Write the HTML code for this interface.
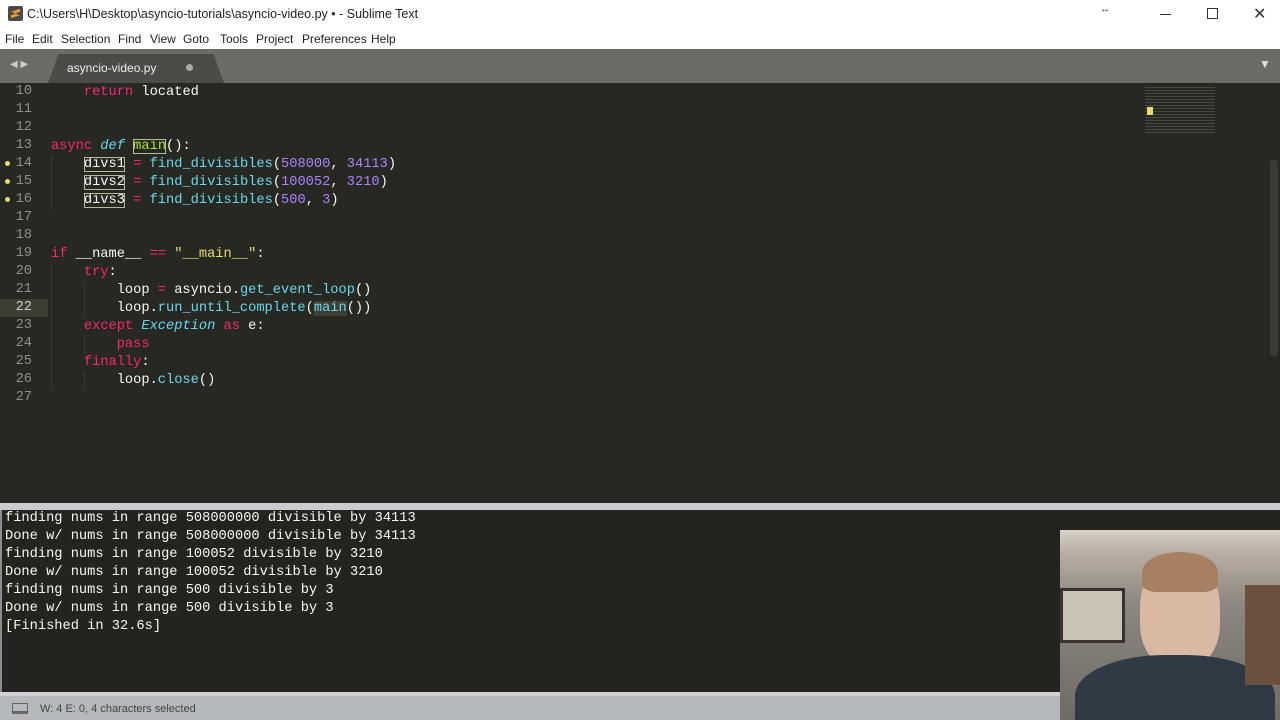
<!DOCTYPE html>
<html><head><meta charset="utf-8"><style>
*{margin:0;padding:0;box-sizing:border-box}
body{width:1280px;height:720px;overflow:hidden;background:#272822;font-family:"Liberation Sans",sans-serif;position:relative}
.abs{position:absolute}
#title{left:0;top:0;width:1280px;height:29px;background:#fff;font-size:12.5px;color:#222}
#menu{left:0;top:29px;width:1280px;height:20px;background:#fff;font-size:12px;color:#222}
#menu span{position:absolute;top:3px}
#tabbar{left:0;top:49px;width:1280px;height:34px;background:#6b6c67}
#tab{left:48px;top:54px;width:176px;height:29px;background:#4b4c47;clip-path:polygon(6% 0,94% 0,100% 100%,0 100%)}
#editor{left:0;top:83px;width:1280px;height:420px;background:#272822}
.code{position:absolute;left:0;font-family:"Liberation Mono",monospace;font-size:13.7px;line-height:18px;color:#f8f8f2;white-space:pre}
.ln{position:absolute;left:0;width:32px;text-align:right;font-family:"Liberation Mono",monospace;font-size:13.7px;color:#8f908a}
.k{color:#f92672}.f{color:#66d9ef}.n{color:#ae81ff}.s{color:#e6db74}.i{color:#66d9ef;font-style:italic}.g{color:#a6e22e}
.box{outline:1px solid #b8b89a;outline-offset:-1px}
.out{position:absolute;left:5px;font-family:"Liberation Mono",monospace;font-size:13.7px;line-height:18px;color:#f8f8f2;white-space:pre}
.guide{position:absolute;width:1px;background:#3b3c36}
</style></head><body>
<div id="title" class="abs">
 <div class="abs" style="left:8px;top:6px;width:15px;height:15px;background:#4a4a4a;border-radius:2px"><div style="position:absolute;left:3px;top:3px;width:9px;height:9px;background:#f0a030;clip-path:polygon(0 30%,100% 0,100% 30%,30% 50%,100% 70%,0 100%,0 70%,70% 50%,0 30%)"></div></div>
 <span class="abs" style="left:27px;top:7px">C:\Users\H\Desktop\asyncio-tutorials\asyncio-video.py • - Sublime Text</span>
 <span class="abs" style="left:1100px;top:4px;font-size:10px">↔</span>
 <div class="abs" style="left:1160px;top:14px;width:11px;height:1px;background:#333"></div>
 <div class="abs" style="left:1207px;top:8px;width:11px;height:11px;border:1px solid #333"></div>
 <span class="abs" style="left:1253px;top:4px;font-size:16px;color:#333">✕</span>
</div>
<div id="menu" class="abs">
 <span style="left:5px">File</span><span style="left:32px">Edit</span><span style="left:61px">Selection</span><span style="left:118px">Find</span><span style="left:150px">View</span><span style="left:183px">Goto</span><span style="left:220px">Tools</span><span style="left:256px">Project</span><span style="left:302px">Preferences</span><span style="left:371px">Help</span>
</div>
<div id="tabbar" class="abs"></div>
<div id="tab" class="abs"></div>
<span class="abs" style="left:10px;top:59px;color:#ccc;font-size:10px">◀ ▶</span>
<span class="abs" style="left:67px;top:61px;color:#eee;font-size:12px">asyncio-video.py</span>
<div class="abs" style="left:186px;top:64px;width:7px;height:7px;border-radius:50%;background:#aaa"></div>
<span class="abs" style="left:1259px;top:57px;color:#ddd;font-size:12px">▼</span>
<div id="editor" class="abs"></div>
<div class="abs" style="left:0;top:299px;width:48px;height:18px;background:#3e3d32"></div>
<div class="guide" style="left:51px;top:264px;height:126px"></div>
<div class="guide" style="left:84px;top:282px;height:36px"></div>
<div class="guide" style="left:84px;top:336px;height:18px"></div>
<div class="guide" style="left:84px;top:372px;height:18px"></div>
<div class="guide" style="left:51px;top:156px;height:54px"></div>
<div class="abs" style="left:1270px;top:160px;width:8px;height:196px;background:#3a3b36;border-radius:3px"></div>
<div class="abs" style="left:1145px;top:85px;width:70px;height:50px;opacity:.5;background:repeating-linear-gradient(#272822 0 2px,#6a6a5a 2px 3px)"></div>
<div class="abs" style="left:1147px;top:107px;width:6px;height:8px;background:#e6db74"></div>
<div class="ln" style="top:84px">10</div>
<div class="ln" style="top:102px">11</div>
<div class="ln" style="top:120px">12</div>
<div class="ln" style="top:138px">13</div>
<div class="ln" style="top:156px">14</div>
<div class="ln" style="top:174px">15</div>
<div class="ln" style="top:192px">16</div>
<div class="ln" style="top:210px">17</div>
<div class="ln" style="top:228px">18</div>
<div class="ln" style="top:246px">19</div>
<div class="ln" style="top:264px">20</div>
<div class="ln" style="top:282px">21</div>
<div class="ln" style="top:300px;color:#ccc">22</div>
<div class="ln" style="top:318px">23</div>
<div class="ln" style="top:336px">24</div>
<div class="ln" style="top:354px">25</div>
<div class="ln" style="top:372px">26</div>
<div class="ln" style="top:390px">27</div>
<div class="abs" style="left:5px;top:161px;width:5px;height:5px;border-radius:50%;background:#e6db74"></div>
<div class="abs" style="left:5px;top:179px;width:5px;height:5px;border-radius:50%;background:#e6db74"></div>
<div class="abs" style="left:5px;top:197px;width:5px;height:5px;border-radius:50%;background:#e6db74"></div>
<div class="code" style="top:84px;left:51px">    <span class="k">return</span> located


<span class="k">async</span> <span class="i">def</span> <span class="g box">main</span>():
    <span class="box">divs1</span> <span class="k">=</span> <span class="f">find_divisibles</span>(<span class="n">508000</span>, <span class="n">34113</span>)
    <span class="box">divs2</span> <span class="k">=</span> <span class="f">find_divisibles</span>(<span class="n">100052</span>, <span class="n">3210</span>)
    <span class="box">divs3</span> <span class="k">=</span> <span class="f">find_divisibles</span>(<span class="n">500</span>, <span class="n">3</span>)


<span class="k">if</span> __name__ <span class="k">==</span> <span class="s">"__main__"</span>:
    <span class="k">try</span>:
        loop <span class="k">=</span> asyncio.<span class="f">get_event_loop</span>()
        loop.<span class="f">run_until_complete</span>(<span class="f" style="background:#3e3d32">main</span>())
    <span class="k">except</span> <span class="i">Exception</span> <span class="k">as</span> e:
        <span class="k">pass</span>
    <span class="k">finally</span>:
        loop.<span class="f">close</span>()
</div>
<div class="abs" style="left:0;top:503px;width:1280px;height:7px;background:#c9cbcd"></div>
<div class="abs" style="left:0;top:510px;width:1280px;height:182px;background:#23241f;border-left:2px solid #8a8c8e"></div>
<div class="out" style="top:510px">finding nums in range 508000000 divisible by 34113
Done w/ nums in range 508000000 divisible by 34113
finding nums in range 100052 divisible by 3210
Done w/ nums in range 100052 divisible by 3210
finding nums in range 500 divisible by 3
Done w/ nums in range 500 divisible by 3
[Finished in 32.6s]</div>
<div class="abs" style="left:0;top:692px;width:1280px;height:28px;background:#b4b8bb;border-top:4px solid #cfd2d4"></div>
<div class="abs" style="left:12px;top:703px;width:16px;height:11px;border:1px solid #666;border-bottom:3px solid #666"></div>
<span class="abs" style="left:40px;top:703px;font-size:11px;color:#444">W: 4 E: 0, 4 characters selected</span>
<div class="abs" style="left:1060px;top:530px;width:220px;height:190px;background:linear-gradient(180deg,#d9d2c8 0,#b8aea3 12%,#8b8680 40%,#6e6a64 100%);overflow:hidden">
 <div class="abs" style="left:0;top:58px;width:65px;height:55px;background:#c9c3b6;border:3px solid #3a3230"></div>
 <div class="abs" style="left:80px;top:28px;width:80px;height:110px;border-radius:45% 45% 40% 40%;background:#d9b8a4"></div>
 <div class="abs" style="left:82px;top:22px;width:76px;height:40px;border-radius:50% 50% 20% 20%;background:#a68060"></div>
 <div class="abs" style="left:15px;top:125px;width:200px;height:90px;border-radius:45% 45% 0 0;background:#2f3a44"></div>
 <div class="abs" style="left:185px;top:55px;width:35px;height:100px;background:#6b5040"></div>
</div>
</body></html>
